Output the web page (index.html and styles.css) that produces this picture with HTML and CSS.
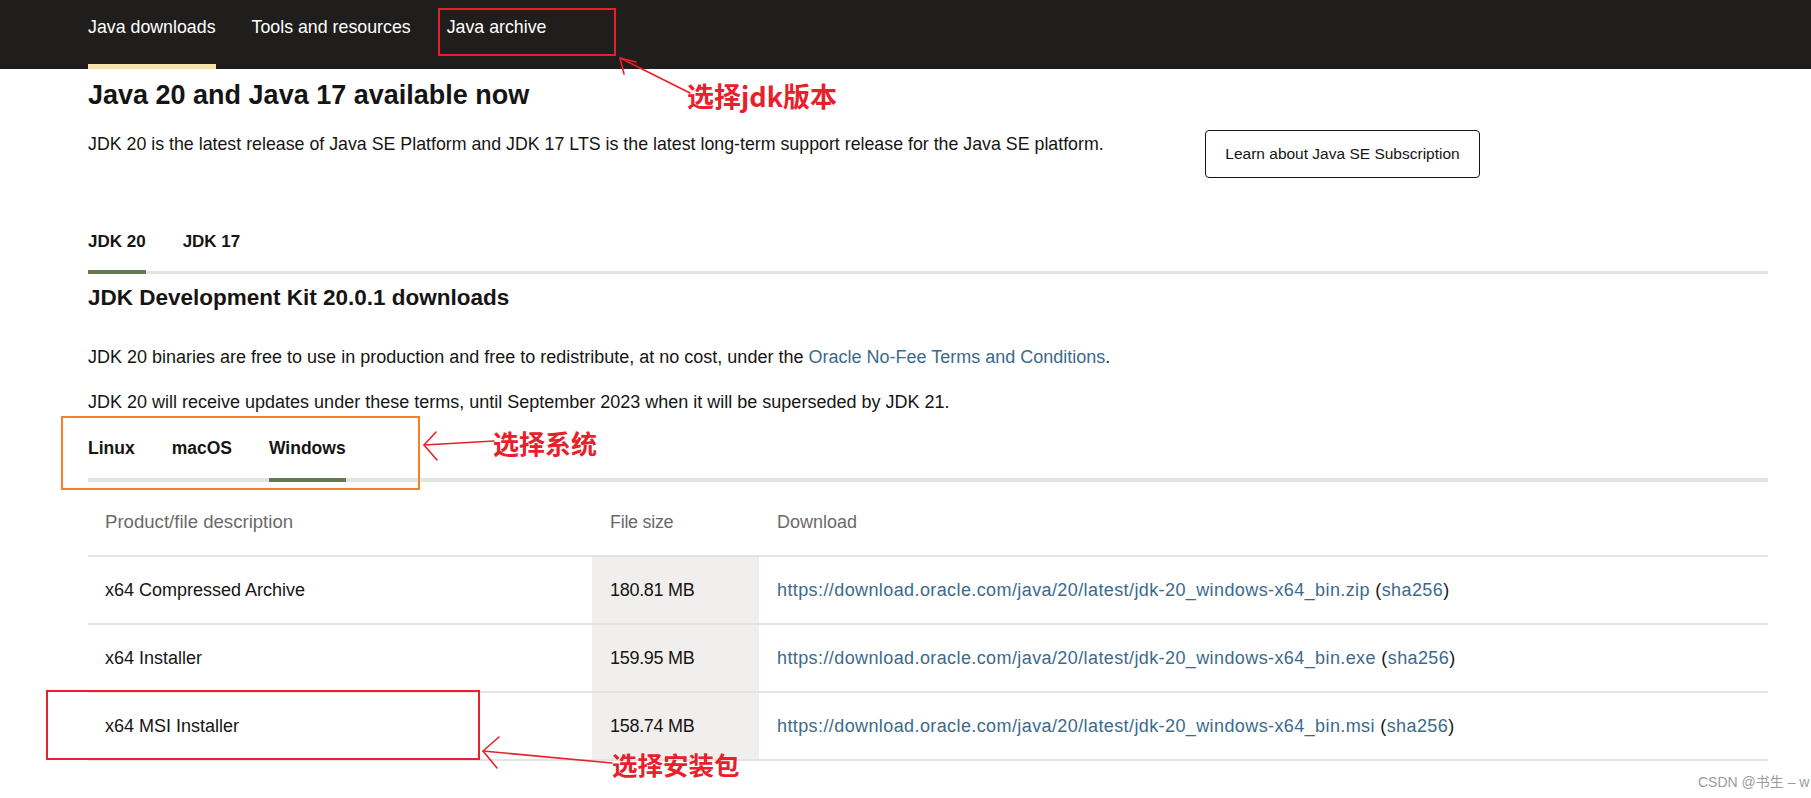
FILE: index.html
```html
<!DOCTYPE html>
<html lang="en">
<head>
<meta charset="utf-8">
<title>Java Downloads</title>
<link rel="stylesheet" href="styles.css">
</head>
<body>
<header class="topnav">
  <nav class="nav-list">
    <a class="nav-item active">Java downloads</a>
    <a class="nav-item">Tools and resources</a>
    <a class="nav-item">Java archive</a>
  </nav>
</header>

<main class="page">
  <h1 class="title">Java 20 and Java 17 available now</h1>
  <div class="intro">
    <p class="intro-text">JDK 20 is the latest release of Java SE Platform and JDK 17 LTS is the latest long-term support release for the Java SE platform.</p>
    <a class="btn">Learn about Java SE Subscription</a>
  </div>

  <div class="tabs version-tabs">
    <span class="tab active">JDK 20</span>
    <span class="tab">JDK 17</span>
  </div>

  <h2 class="kit-title">JDK Development Kit 20.0.1 downloads</h2>
  <p class="para">JDK 20 binaries are free to use in production and free to redistribute, at no cost, under the <a class="link">Oracle No-Fee Terms and Conditions</a>.</p>
  <p class="para second">JDK 20 will receive updates under these terms, until September 2023 when it will be superseded by JDK 21.</p>

  <div class="tabs os-tabs">
    <span class="tab">Linux</span>
    <span class="tab">macOS</span>
    <span class="tab active">Windows</span>
  </div>

  <table class="dl-table">
    <thead>
      <tr><th class="c-desc">Product/file description</th><th class="c-size">File size</th><th class="c-dl">Download</th></tr>
    </thead>
    <tbody>
      <tr><td class="c-desc">x64 Compressed Archive</td><td class="c-size shade">180.81 MB</td><td class="c-dl"><a class="link">https://download.oracle.com/java/20/latest/jdk-20_windows-x64_bin.zip</a> (<a class="link">sha256</a>)</td></tr>
      <tr><td class="c-desc">x64 Installer</td><td class="c-size shade">159.95 MB</td><td class="c-dl"><a class="link">https://download.oracle.com/java/20/latest/jdk-20_windows-x64_bin.exe</a> (<a class="link">sha256</a>)</td></tr>
      <tr><td class="c-desc">x64 MSI Installer</td><td class="c-size shade">158.74 MB</td><td class="c-dl"><a class="link">https://download.oracle.com/java/20/latest/jdk-20_windows-x64_bin.msi</a> (<a class="link">sha256</a>)</td></tr>
    </tbody>
  </table>
</main>

<!-- annotations drawn over the screenshot -->
<div class="mark mark-red mark-archive"></div>
<div class="mark mark-orange mark-os"></div>
<div class="mark mark-red mark-msi"></div>
<svg class="arrows" width="1811" height="798" viewBox="0 0 1811 798" fill="none" stroke="#e8202a" stroke-width="1.6" stroke-linecap="round">
  <path d="M620 58 L690 93"/>
  <path d="M620 58 L624 74 M620 58 L636 62"/>
  <path d="M424 445 L494 441"/>
  <path d="M424 445 L436 432 M424 445 L437 460"/>
  <path d="M483 751 L612 763"/>
  <path d="M483 751 L499 737 M483 751 L497 768"/>
</svg>
<div class="note note-jdk">选择jdk版本</div>
<div class="note note-os">选择系统</div>
<div class="note note-pkg">选择安装包</div>
<div class="watermark">CSDN @书生 – w</div>
</body>
</html>
```
FILE: styles.css
```css
* { box-sizing: border-box; }
html, body { margin: 0; padding: 0; }
body {
  width: 1811px;
  height: 798px;
  overflow: hidden;
  position: relative;
  background: #fff;
  color: #161513;
  font-family: "Liberation Sans", Arial, sans-serif;
  font-size: 18px;
}
a { color: inherit; text-decoration: none; }
p { margin: 0; }

.topnav {
  height: 69px;
  background: #201e1c;
  padding-left: 88px;
}
.nav-list {
  display: flex;
  gap: 36px;
  height: 100%;
}
.nav-item {
  color: #fff;
  font-size: 17.8px;
  line-height: 22px;
  padding-top: 16px;
  height: 69px;
  border-bottom: 5px solid transparent;
}
.nav-item.active { border-bottom-color: #f5e2a8; }

.page {
  padding-left: 88px;
  width: 1768px;
}
.title {
  margin: 10px 0 0;
  font-size: 27px;
  line-height: 32px;
  font-weight: bold;
}
.intro {
  display: flex;
  align-items: flex-start;
  margin-top: 21px;
}
.intro-text {
  width: 1117px;
  line-height: 24px;
  flex: none;
  font-size: 17.8px;
}
.btn {
  display: flex;
  align-items: center;
  justify-content: center;
  width: 275px;
  height: 48px;
  margin-top: -2px;
  border: 1px solid #161513;
  border-radius: 4px;
  font-size: 15.5px;
}

.tabs {
  display: flex;
  gap: 37px;
  border-bottom: 3px solid #e4e3df;
}
.tab {
  font-weight: bold;
  font-size: 17px;
  line-height: 24px;
  padding-bottom: 16px;
  border-bottom: 4px solid transparent;
  margin-bottom: -3px;
}
.tab.active { border-bottom-color: #667a52; }
.version-tabs { margin-top: 52px; }

.kit-title {
  margin: 10px 0 0;
  font-size: 22.5px;
  line-height: 28px;
  font-weight: bold;
}
.para {
  line-height: 24px;
  margin-top: 33px;
}
.para.second { margin-top: 21px; }
.link { color: #3b6a8c; }

.os-tabs {
  margin-top: 22px;
  border-bottom-width: 4px;
}
.os-tabs .tab {
  font-size: 17.5px;
  padding-bottom: 18px;
  margin-bottom: -4px;
}

.dl-table {
  width: 1680px;
  border-collapse: collapse;
  font-size: 18px;
}
.dl-table th {
  text-align: left;
  font-weight: normal;
  color: #6b6a68;
  height: 74px;
  padding: 6px 17px 0 18px;
  border-bottom: 2px solid #e4e3df;
  line-height: 24px;
}
.dl-table th.c-desc { font-size: 18.6px; }
.dl-table td {
  height: 68px;
  padding: 0 17px 0 18px;
  border-bottom: 2px solid #e4e3df;
  line-height: 24px;
}
.dl-table .c-desc { width: 504px; padding-left: 17px; }
.dl-table .c-size { width: 167px; letter-spacing: -0.3px; }
.dl-table td.c-dl { letter-spacing: 0.4px; }
.dl-table td.shade { background: #f1efed; }

/* annotation overlays */
.mark { position: absolute; }
.mark-red { border: 2px solid #e8202a; }
.mark-orange { border: 2px solid #f58025; }
.mark-archive { left: 438px; top: 8px; width: 178px; height: 48px; }
.mark-os { left: 61px; top: 416px; width: 359px; height: 74px; }
.mark-msi { left: 46px; top: 690px; width: 434px; height: 70px; }
.arrows { position: absolute; left: 0; top: 0; }
.note {
  position: absolute;
  color: #e8202a;
  font-family: "Noto Sans CJK SC", "Liberation Sans", sans-serif;
  font-weight: bold;
  line-height: 1;
}
.note-jdk { left: 687px; top: 82px; font-size: 27px; }
.note-os { left: 493px; top: 430px; font-size: 26px; }
.note-pkg { left: 612px; top: 751px; font-size: 25.5px; }
.watermark {
  position: absolute;
  left: 1698px;
  top: 771px;
  font-size: 14px;
  white-space: nowrap;
  color: #9b9b9b;
  font-family: "Liberation Sans", "Noto Sans CJK SC", sans-serif;
}
```
